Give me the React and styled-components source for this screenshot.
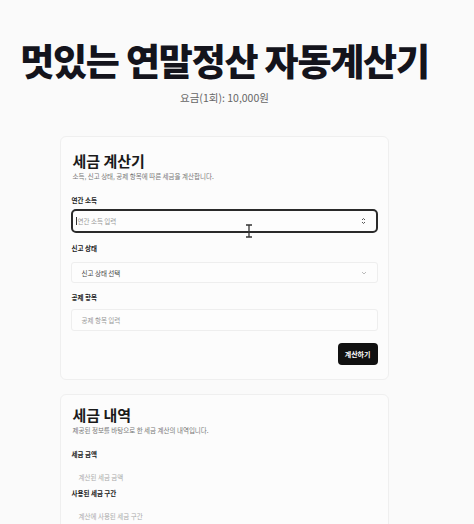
import React from 'react'
import styled, { createGlobalStyle } from 'styled-components'

const GlobalStyle = createGlobalStyle`
  body {
    margin: 0;
    background: #fafafa;
    font-family: "Noto Sans CJK KR", "Noto Sans", sans-serif;
    color: #111;
  }
`

const Page = styled.div`
  width: 449px;
  display: flex;
  flex-direction: column;
  align-items: center;
  padding-top: 32px;
`

const Title = styled.h1`
  margin: 0;
  font-size: 37px;
  font-weight: 800;
  letter-spacing: -1.2px;
  line-height: 56px;
  color: #14141c;
`

const Price = styled.p`
  margin: 3px 0 0;
  font-size: 10.5px;
  color: #666;
  line-height: 14px;
`

const Card = styled.section`
  box-sizing: border-box;
  width: 329px;
  margin-left: -1px;
  margin-top: ${(p) => p.$top}px;
  padding: ${(p) => p.$pt}px 10px 14px 10px;
  background: #fcfcfc;
  border: 1px solid #efefef;
  border-radius: 6px;
  display: flex;
  flex-direction: column;
`

const CardTitle = styled.h2`
  margin: 0 0 0 2px;
  font-size: 15px;
  font-weight: 700;
  line-height: 20px;
  color: #1a1a1a;
`

const CardDesc = styled.p`
  margin: 0 0 0 2px;
  font-size: 6.5px;
  line-height: 10px;
  color: #777;
`

const Form = styled.div`
  margin-top: 14px;
  display: flex;
  flex-direction: column;
`

const Label = styled.label`
  font-size: 6.5px;
  font-weight: 700;
  line-height: 10px;
  color: #222;
  margin: ${(p) => p.$m || '0 0 4px 1px'};
`

const Field = styled.div`
  position: relative;
  box-sizing: border-box;
  height: ${(p) => p.$h}px;
  display: flex;
  align-items: center;
  justify-content: space-between;
  padding: 0 10px 0 ${(p) => (p.$focus ? 3 : 10)}px;
  border: ${(p) => (p.$focus ? '2px solid #2a2a2a' : '1px solid #eeeeee')};
  border-radius: ${(p) => (p.$focus ? 5 : 3)}px;
  background: #fdfdfd;
  font-size: 6.5px;
  color: ${(p) => (p.$dark ? '#444' : '#999')};
`

const Caret = styled.span`
  display: flex;
  align-items: center;
  gap: 1px;
  &::before {
    content: '';
    width: 1px;
    height: 8px;
    background: #333;
  }
`

const Actions = styled.div`
  display: flex;
  justify-content: flex-end;
  margin-top: 12px;
`

const Button = styled.button`
  height: 22px;
  padding: 0 7px;
  border: none;
  border-radius: 4px;
  background: #111;
  color: #fff;
  font-family: inherit;
  font-size: 7px;
  font-weight: 700;
`

const Value = styled.div`
  padding-left: 8px;
  font-size: 6.5px;
  line-height: 10px;
  color: #aaa;
  margin: ${(p) => p.$m};
`

const Cursor = styled.svg`
  position: absolute;
  left: 172px;
  top: 13px;
`

export default function App() {
  return (
    <>
      <GlobalStyle />
      <Page>
        <Title>멋있는 연말정산 자동계산기</Title>
        <Price>요금(1회): 10,000원</Price>

        <Card $top={31} $pt={14}>
          <CardTitle>세금 계산기</CardTitle>
          <CardDesc>소득, 신고 상태, 공제 항목에 따른 세금을 계산합니다.</CardDesc>
          <Form>
            <Label>연간 소득</Label>
            <Field $h={24} $focus>
              <Caret>연간 소득 입력</Caret>
              <svg width="5" height="8" viewBox="0 0 5 8">
                <path d="M1 3 L2.5 1.5 L4 3 M1 5 L2.5 6.5 L4 5" stroke="#555" strokeWidth="1" fill="none" />
              </svg>
              <Cursor width="8" height="14" viewBox="0 0 8 14">
                <path d="M1 1 H7 M4 1 V13 M1 13 H7" stroke="#333" strokeWidth="1.3" fill="none" />
              </Cursor>
            </Field>
            <Label $m="10px 0 9px 1px">신고 상태</Label>
            <Field $h={21} $dark>
              <span>신고 상태 선택</span>
              <svg width="6" height="4" viewBox="0 0 6 4">
                <path d="M1 1 L3 3 L5 1" stroke="#aaa" strokeWidth="0.8" fill="none" />
              </svg>
            </Field>
            <Label $m="9px 0 7px 1px">공제 항목</Label>
            <Field $h={22}>
              <span>공제 항목 입력</span>
            </Field>
          </Form>
          <Actions>
            <Button>계산하기</Button>
          </Actions>
        </Card>

        <Card $top={14} $pt={10}>
          <CardTitle>세금 내역</CardTitle>
          <CardDesc>제공된 정보를 바탕으로 한 세금 계산의 내역입니다.</CardDesc>
          <Form>
            <Label $m="0 0 0 1px">세금 금액</Label>
            <Value $m="13px 0 6px">계산된 세금 금액</Value>
            <Label $m="0 0 0 1px">사용된 세금 구간</Label>
            <Value $m="13px 0 6px">계산에 사용된 세금 구간</Value>
          </Form>
        </Card>
      </Page>
    </>
  )
}
